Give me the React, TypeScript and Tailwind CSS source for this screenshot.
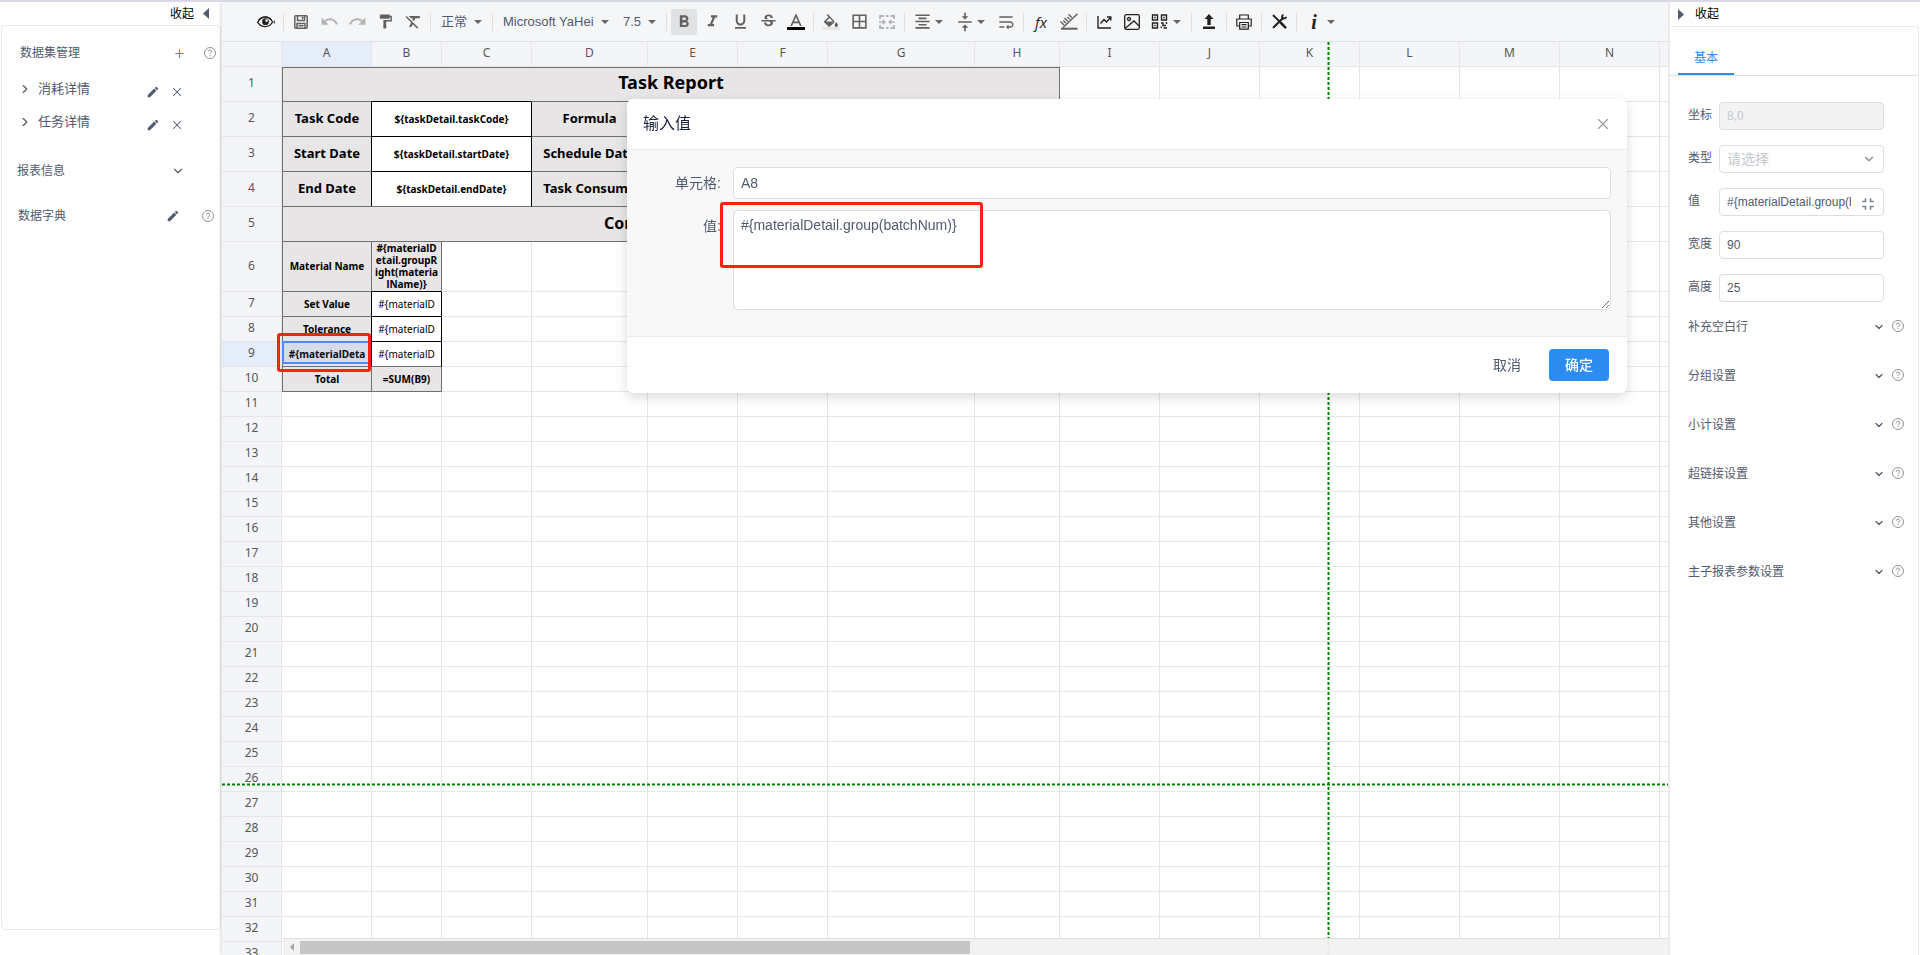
import { useState } from 'react';
import type { ReactNode } from 'react';
import clsx from 'clsx';
import { ChevronDown, ChevronRight, Plus, X } from 'lucide-react';
import {
  MdBorderAll,
  MdFormatAlignCenter,
  MdFormatBold,
  MdFormatClear,
  MdFormatColorFill,
  MdFormatItalic,
  MdFormatPaint,
  MdFormatUnderlined,
  MdFullscreenExit,
  MdModeEdit,
  MdRedo,
  MdStrikethroughS,
  MdUndo,
  MdVerticalAlignCenter,
  MdWrapText,
} from 'react-icons/md';

type Cell = { text: string; span?: number; cls: string };

const columns = [
  { name: 'A', width: 90 },
  { name: 'B', width: 70 },
  { name: 'C', width: 90 },
  { name: 'D', width: 116 },
  { name: 'E', width: 90 },
  { name: 'F', width: 90 },
  { name: 'G', width: 147 },
  { name: 'H', width: 85 },
  { name: 'I', width: 100 },
  { name: 'J', width: 100 },
  { name: 'K', width: 100 },
  { name: 'L', width: 100 },
  { name: 'M', width: 100 },
  { name: 'N', width: 100 },
  { name: 'O', width: 100 },
];

const gray = 'bg-[#e7e5e6] border-[#707070] font-bold text-black';
const label = gray + ' pb-[3px] text-[13px]';
const small = gray + ' pb-px text-[10px]';
const bound = 'bg-white border-black shadow-[-1px_-1px_0_#000] pb-px text-[10px] text-black';

const cells: Record<string, Cell> = {
  A1: { text: 'Task Report', span: 8, cls: gray + ' border-t pb-[5px] text-[18px]' },
  A2: { text: 'Task Code', cls: label },
  B2: { text: '${taskDetail.taskCode}', span: 2, cls: bound + ' font-bold' },
  D2: { text: 'Formula', cls: label },
  A3: { text: 'Start Date', cls: label },
  B3: { text: '${taskDetail.startDate}', span: 2, cls: bound + ' font-bold' },
  D3: { text: 'Schedule Date', cls: label },
  A4: { text: 'End Date', cls: label },
  B4: { text: '${taskDetail.endDate}', span: 2, cls: bound + ' border-b-[#707070] font-bold' },
  D4: { text: 'Task Consume', cls: label },
  A5: { text: 'Consume Details', span: 8, cls: gray + ' pb-[3px] text-[16px]' },
  A6: { text: 'Material Name', cls: small },
  B6: { text: '#{materialD\netail.groupR\night(materia\nlName)}', cls: small },
  A7: { text: 'Set Value', cls: small },
  B7: { text: '#{materialD', cls: bound },
  A8: { text: 'Tolerance', cls: small },
  B8: { text: '#{materialD', cls: bound },
  A9: { text: '#{materialDeta', cls: small },
  B9: { text: '#{materialD', cls: bound + ' border-b-[#707070]' },
  A10: { text: 'Total', cls: small },
  B10: { text: '=SUM(B9)', cls: small },
};

const headCell = 'border-r border-b border-[#e6e6e6] p-0 pb-[2px] text-[12px] leading-[16px] font-normal text-[#585757]';

function rowHeight(row: number) {
  if (row < 6) return 'h-[35px]';
  if (row === 6) return 'h-[50px]';
  return 'h-[25px]';
}

function SheetRow({ row }: { row: number }) {
  const tds: ReactNode[] = [];
  for (let i = 0; i < columns.length; i++) {
    const cell = cells[columns[i].name + row];
    const selected = row === 9 && i === 0;
    tds.push(
      <td
        key={i}
        colSpan={cell?.span}
        className={clsx(
          'relative border-r border-b p-0 text-center whitespace-pre leading-[12px]',
          cell ? cell.cls : 'border-[#e6e6e6] bg-white',
          cell && i === 0 && 'border-l'
        )}
      >
        {cell?.text}
        {selected && <span className="absolute -top-px -left-px h-[23px] w-[88px] border-2 border-[#4b89ff] bg-[#4b89ff1a]"></span>}
        {selected && <span className="absolute -top-[9px] -left-[6px] z-10 h-[39px] w-[94px] rounded-[3px] border-3 border-[#ff2014]"></span>}
      </td>
    );
    if (cell?.span) i += cell.span - 1;
  }
  return (
    <tr className={rowHeight(row)}>
      <th scope="row" className={clsx(headCell, row === 9 ? 'bg-[#e6edfa]' : 'bg-[#f4f5f8]')}>
        {row}
      </th>
      {tds}
    </tr>
  );
}

function Sheet() {
  const rows = Array.from({ length: 33 }, (_, i) => i + 1);
  return (
    <div className="relative min-h-0 flex-1 overflow-hidden bg-white font-['Noto_Sans',sans-serif]">
      <table className="w-[1538px] table-fixed border-separate border-spacing-0">
        <colgroup>
          <col className="w-[60px]" />
          {columns.map((c) => (
            <col key={c.name} style={{ width: c.width }} />
          ))}
        </colgroup>
        <thead>
          <tr className="h-[25px]">
            <th className={clsx(headCell, 'bg-[#f4f5f8]')}></th>
            {columns.map((c) => (
              <th key={c.name} scope="col" className={clsx(headCell, c.name === 'A' ? 'bg-[#e6edfa]' : 'bg-[#f4f5f8]')}>
                {c.name}
              </th>
            ))}
          </tr>
        </thead>
        <tbody>
          {rows.map((r) => (
            <SheetRow key={r} row={r} />
          ))}
        </tbody>
      </table>

      {/* print area guides */}
      <svg className="pointer-events-none absolute inset-0 h-full w-full" stroke="#008000" strokeWidth="2" strokeDasharray="3 2">
        <line x1="1106.5" y1="0" x2="1106.5" y2="1000" />
        <line x1="0" y1="742.5" x2="3000" y2="742.5" />
      </svg>

      <div className="absolute right-0 bottom-0 left-[61px] flex h-[17px] items-center border-t border-[#dddddd] bg-[#f1f1f1]/95">
        <button type="button" aria-label="scroll left" className="flex h-4 w-[17px] items-center justify-center">
          <svg width="4" height="8" viewBox="0 0 4 8" fill="#a3a3a3">
            <path d="M4 0v8L0 4z" />
          </svg>
        </button>
        <div className="h-[13px] w-[670px] bg-[#c6c6c6]"></div>
      </div>
    </div>
  );
}

function Caret() {
  return (
    <svg width="8" height="4" viewBox="0 0 8 4" fill="#666">
      <path d="M0 0h8L4 4z" />
    </svg>
  );
}

function Sep() {
  return <span className="mx-[3px] h-[18px] w-px shrink-0 bg-[#dfdfdf]"></span>;
}

function Tool({ name, children, active, dim, dark }: { name: string; children: ReactNode; active?: boolean; dim?: boolean; dark?: boolean }) {
  return (
    <button
      type="button"
      aria-label={name}
      className={clsx(
        'mx-px flex h-[26px] w-[26px] shrink-0 items-center justify-center rounded-[2px]',
        active && 'bg-[#e1e2e4]',
        dark ? 'text-[#222]' : dim ? 'text-[#b3b4b6]' : 'text-[#616161]'
      )}
    >
      {children}
    </button>
  );
}

function DropTool({ name, children, dark }: { name: string; children: ReactNode; dark?: boolean }) {
  return (
    <button
      type="button"
      aria-label={name}
      className={clsx('mx-px flex h-[26px] w-10 shrink-0 items-center justify-between pr-[6px] pl-1', dark ? 'text-[#222]' : 'text-[#616161]')}
    >
      {children}
      <Caret />
    </button>
  );
}

function TextTool({ text, width }: { text: string; width: string }) {
  return (
    <button type="button" className={clsx('mx-px flex h-[26px] shrink-0 items-center justify-between pr-[6px] pl-[6px] text-[13px] leading-4 whitespace-nowrap text-[#515a6e]', width)}>
      {text}
      <Caret />
    </button>
  );
}

function Toolbar() {
  return (
    <div className="flex h-10 shrink-0 items-center overflow-hidden border-b border-[#e0e2e6] bg-[#f5f6f7] pl-[30px]">
      <Tool name="preview" dark>
        <svg width="18" height="12" viewBox="0 0 18 12" fill="none" stroke="currentColor">
          <path d="M.7 6.3C2.5 3 5 1.2 8.3 1.2S14 3 15.6 6c-1.6 2.8-4 4.6-7.3 4.6S2.5 9 .7 6.3z" strokeWidth="1.3" />
          <path d="M1.5 4.2C4 1.2 6 .8 8.5.9s4.500 1 6 3" strokeWidth="1.2" />
          <circle cx="8.5" cy="5.7" r="3.4" fill="currentColor" stroke="none" />
          <circle cx="9.6" cy="4.6" r="1.3" fill="#fff" stroke="none" />
          <path d="M17.3 4.5v3" strokeWidth="1" />
        </svg>
      </Tool>
      <Sep />
      <Tool name="save">
        <svg width="14" height="14" viewBox="0 0 14 14" fill="none" stroke="currentColor" strokeWidth="1.5">
          <rect x=".8" y=".8" width="12.4" height="12.4" rx="1" />
          <path d="M3.500 1v4.500h7V1M3 13V8.500h8V13M8.500 2v2M4.500 10.800h5" />
        </svg>
      </Tool>
      <Tool name="undo" dim><MdUndo size={19} /></Tool>
      <Tool name="redo" dim><MdRedo size={19} /></Tool>
      <Tool name="paint format"><MdFormatPaint size={17} /></Tool>
      <Tool name="clear format"><MdFormatClear size={19} /></Tool>
      <Sep />
      <TextTool text="正常" width="w-[53px]" />
      <Sep />
      <TextTool text="Microsoft YaHei" width="w-[118px]" />
      <TextTool text="7.5" width="w-[45px]" />
      <Sep />
      <Tool name="bold" active><MdFormatBold size={20} /></Tool>
      <Tool name="italic"><MdFormatItalic size={19} /></Tool>
      <Tool name="underline"><MdFormatUnderlined size={19} /></Tool>
      <Tool name="strike"><MdStrikethroughS size={19} /></Tool>
      <Tool name="text color">
        <svg width="18" height="16" viewBox="0 0 18 16" fill="none" stroke="currentColor">
          <path d="M4.2 12L9 1.2 13.8 12M5.800 8.300h6.400" strokeWidth="1.7" />
          <path d="M0 14.500h18" stroke="#000" strokeWidth="3" />
        </svg>
      </Tool>
      <Sep />
      <Tool name="fill color">
        <svg width="18" height="16" viewBox="0 0 18 16" fill="currentColor">
          <path d="M5.800 0L4.700 1.100l1.800 1.800L2.300 7.100a1 1 0 0 0 0 1.300l4.300 4.200a1 1 0 0 0 1.300 0l4.300-4.200a1 1 0 0 0 0-1.300zM7.500 3.900L11 7.400H4zM14.300 8.300s-1.700 1.900-1.700 3a1.700 1.700 0 0 0 3.400 0c0-1.100-1.700-3-1.700-3z" />
          <path d="M0 13h18v3H0z" fill="#e7e5e6" />
        </svg>
      </Tool>
      <Tool name="borders"><MdBorderAll size={19} /></Tool>
      <Tool name="merge" dim>
        <svg width="16" height="14" viewBox="0 0 16 14" fill="none" stroke="currentColor" strokeWidth="1.8">
          <path d="M1 4V1h4M7 1h2.500M11.500 1H15v3M1 10v3h4M7 13h2.500M11.500 13H15v-3" />
          <path d="M0 7h5M16 7h-5M3.700 4.700L6 7 3.700 9.300M12.300 4.700L10 7l2.300 2.300" strokeWidth="1.4" />
        </svg>
      </Tool>
      <Sep />
      <DropTool name="align"><MdFormatAlignCenter size={19} /></DropTool>
      <DropTool name="vertical align"><MdVerticalAlignCenter size={20} /></DropTool>
      <Tool name="wrap"><MdWrapText size={20} /></Tool>
      <Sep />
      <Tool name="formula" dark>
        <span className="font-['Open_Sans',sans-serif] text-[15px] leading-4 font-medium italic">fx</span>
      </Tool>
      <Tool name="ruler">
        <svg width="18" height="17" viewBox="0 0 18 17" fill="none" stroke="currentColor">
          <path d="M17.500.7L3 14.500" strokeWidth="1.5" />
          <path d="M1 15.700h16.500" strokeWidth="2" />
          <path d="M.5 8.500l3.500 3.500M3.300 7.500l2.500 2.500M4.500 5l3.300 3.300M7.500 4l2.200 2.200M8.500 1.200l3.300 3.300" strokeWidth="1.4" />
        </svg>
      </Tool>
      <Sep />
      <Tool name="chart" dark>
        <svg width="15" height="14" viewBox="0 0 15 14" fill="none" stroke="currentColor" strokeWidth="1.4">
          <path d="M1 1v12h13M3.500 8.500L7 4.500l2.500 2.500L13.500 2.500M10 2h3.800v3.600" />
        </svg>
      </Tool>
      <Tool name="image" dark>
        <svg width="16" height="16" viewBox="0 0 16 16" fill="none" stroke="currentColor" strokeWidth="1.3">
          <rect x=".7" y=".7" width="14.6" height="14.6" rx="1.5" />
          <circle cx="5" cy="5" r="1.5" />
          <path d="M1 14.500L10 7l5 5" />
        </svg>
      </Tool>
      <DropTool name="code" dark>
        <svg width="17" height="15" viewBox="0 0 16 15" fill="none" stroke="currentColor" strokeWidth="1.4">
          <path d="M1 1h5v5H1zM10 1h5v5h-5zM1 9h5v5H1zM9.500 9h2v2.500h3M15 8v2M9.700 14v-1.500M12 14h3.500" />
          <path d="M2.800 3.500h1.400M11.800 3.500h1.400M2.800 11.500h1.400" />
        </svg>
      </DropTool>
      <Sep />
      <Tool name="upload" dark>
        <svg width="12" height="15" viewBox="0 0 12 15" fill="currentColor">
          <path d="M6 0l4.500 5H7.700v6H4.300V5H1.500zM0 12.500h12V15H0z" />
        </svg>
      </Tool>
      <Sep />
      <Tool name="print" dark>
        <svg width="16" height="16" viewBox="0 0 16 16" fill="none" stroke="currentColor" strokeWidth="1.2">
          <path d="M3.700 5V1h8.600v4M3.700 12H.8V5h14.400v7h-2.900M3.700 8.500h8.600v6.700H3.700zM5.500 10.700h5M5.500 13h5" />
        </svg>
      </Tool>
      <Sep />
      <Tool name="tools" dark>
        <svg width="15" height="15" viewBox="0 0 15 15" fill="none" stroke="currentColor" strokeLinecap="round">
          <path d="M1.500 1.500l6 6" strokeWidth="1.8" />
          <path d="M9 9l4.300 4.300" strokeWidth="2.6" />
          <path d="M1.700 13.300L11 4" strokeWidth="2.2" />
          <path d="M10.800 1.200c-1.200 1-1 3.200.6 3.300 1 .1 2-.1 2.500-1" strokeWidth="1.8" />
        </svg>
      </Tool>
      <Sep />
      <DropTool name="info" dark>
        <span className="w-[18px] text-center font-['Liberation_Serif',serif] text-[20px] leading-5 font-bold italic">i</span>
      </DropTool>
    </div>
  );
}

function HelpIcon() {
  return (
    <svg width="12" height="12" viewBox="0 0 12 12" fill="none" stroke="#888" className="shrink-0">
      <circle cx="6" cy="6" r="5.500" strokeWidth=".9" />
      <path d="M4.300 4.700c0-2.100 3.400-2.100 3.400 0C7.700 5.800 6 5.900 6 7.200M6 8.100v1.100" strokeWidth="1" />
    </svg>
  );
}

function Datasets() {
  return (
    <ul className="mt-[13px] flex flex-col gap-[7px]">
      {['消耗详情', '任务详情'].map((name) => (
        <li key={name} className="flex h-[26px] items-center pl-[16px]">
          <ChevronRight size={14} strokeWidth={2} />
          <span className="ml-[6px] text-[13px] leading-5">{name}</span>
          <button type="button" aria-label={'edit ' + name} className="mt-[6px] ml-auto"><MdModeEdit size={14} /></button>
          <button type="button" aria-label={'remove ' + name} className="mt-[6px] mr-[36px] ml-[10px]"><X size={14} strokeWidth={1.800} /></button>
        </li>
      ))}
    </ul>
  );
}

function LeftPanel() {
  return (
    <aside className="flex w-[222px] shrink-0 flex-col text-[12px] text-[#515a6e]">
      <button type="button" className="flex h-[23px] items-center justify-end gap-[9px] pr-[13px] text-black">
        收起
        <svg width="6" height="11" viewBox="0 0 6 11" fill="#515a6e"><path d="M6 0v11L0 5.500z" /></svg>
      </button>
      <div className="mr-px mb-[25px] ml-px flex-1 rounded-[4px] border border-[#e8eaec]">
        <div className="mt-[17px] flex h-5 items-center pl-[18px]">
          数据集管理
          <button type="button" aria-label="add" className="ml-auto text-[#2d8cf0]"><Plus size={13} strokeWidth={2} /></button>
          <span className="mr-1 ml-[18px]"><HelpIcon /></span>
        </div>
        <Datasets />
        <div className="mt-[26px] flex h-5 items-center pl-[15px]">
          报表信息
          <ChevronDown size={14} strokeWidth={2} className="mr-[35px] ml-auto" />
        </div>
        <div className="mt-[25px] flex h-5 items-center pl-[16px]">
          数据字典
          <button type="button" aria-label="edit" className="ml-auto"><MdModeEdit size={14} /></button>
          <span className="mr-[6px] ml-[22px]"><HelpIcon /></span>
        </div>
      </div>
    </aside>
  );
}

const field = 'h-7 w-[165px] rounded-[4px] border border-[#dcdee2] px-[7px] text-[12px] text-[#515a6e]';
const sections = ['补充空白行', '分组设置', '小计设置', '超链接设置', '其他设置', '主子报表参数设置'];

function Field({ id, name, children }: { id: string; name: string; children: ReactNode }) {
  return (
    <div className="flex">
      <label htmlFor={id} className="w-[31px] pt-[3px] leading-5">{name}</label>
      <div className="relative">{children}</div>
    </div>
  );
}

function RightPanel() {
  const [width, setWidth] = useState('90');
  const [height, setHeight] = useState('25');
  return (
    <aside className="flex w-[252px] shrink-0 flex-col border-l-2 border-[#ebebeb] bg-white text-[12px] text-[#515a6e]">
      <button type="button" className="flex h-6 items-center gap-[11px] pl-2 text-black">
        <svg width="6" height="11" viewBox="0 0 6 11" fill="#515a6e"><path d="M0 0v11l6-5.500z" /></svg>
        收起
      </button>
      <div className="mr-px flex-1 rounded-t-[4px] border-t border-r border-[#e8eaec]">
        <div className="flex border-b border-[#dcdee2] pt-[16px] pl-2">
          <button type="button" className="h-8 border-b-2 border-[#2d8cf0] px-4 leading-5 text-[#2d8cf0]">基本</button>
        </div>
        <form className="mt-[26px] flex flex-col gap-[15px] pl-[18px]">
          <Field id="coord" name="坐标">
            <input id="coord" disabled value="8,0" className={field + ' bg-[#f3f3f3] text-[#c5c8ce]!'} />
          </Field>
          <Field id="type" name="类型">
            <select id="type" className={field + ' appearance-none bg-white text-[14px]! text-[#c5c8ce]!'}>
              <option>请选择</option>
            </select>
            <ChevronDown size={14} className="pointer-events-none absolute top-[7px] right-[8px] text-[#808695]" />
          </Field>
          <Field id="cellValue" name="值">
            <input id="cellValue" readOnly value="#{materialDetail.group(batchNum)}" className={field + ' pr-[32px]'} />
            <MdFullscreenExit size={20} className="absolute top-[6px] right-[6px] text-[#808695]" />
          </Field>
          <Field id="cellWidth" name="宽度">
            <input id="cellWidth" value={width} onChange={(e) => setWidth(e.target.value)} className={field} />
          </Field>
          <Field id="cellHeight" name="高度">
            <input id="cellHeight" value={height} onChange={(e) => setHeight(e.target.value)} className={field} />
          </Field>
        </form>
        <div className="mt-[15px] flex flex-col gap-[29px] pl-[18px]">
          {sections.map((s) => (
            <button key={s} type="button" className="flex h-5 items-center text-left">
              {s}
              <ChevronDown size={12} strokeWidth={2.500} className="ml-auto" />
              <span className="mr-[14px] mb-[3px] ml-[7px]"><HelpIcon /></span>
            </button>
          ))}
        </div>
      </div>
    </aside>
  );
}

function ValueDialog() {
  const [value, setValue] = useState('#{materialDetail.group(batchNum)}');
  return (
    <div role="dialog" aria-labelledby="dialogTitle" className="fixed top-[99px] right-[293px] z-20 w-[1000px] rounded-[6px] bg-white text-[14px] text-[#515a6e] shadow-[0_4px_12px_rgba(0,0,0,0.15)]">
      <div className="flex h-[51px] items-center justify-between border-b border-[#e8eaec] pr-[15px] pl-4">
        <h2 id="dialogTitle" className="text-[16px] leading-5 text-[#17233d]">输入值</h2>
        <button type="button" aria-label="close" className="text-[#999]"><X size={18} strokeWidth={1.500} /></button>
      </div>
      <form className="flex flex-col gap-[11px] border-b border-[#e8eaec] bg-[#f8f8f8] pt-[17px] pr-4 pb-[26px]">
        <div className="flex">
          <label htmlFor="cell" className="w-[106px] shrink-0 pt-[6px] pr-3 text-right leading-5">单元格:</label>
          <input id="cell" readOnly value="A8" className="h-8 flex-1 rounded-[4px] border border-[#dcdee2] bg-white px-[7px]" />
        </div>
        <div className="relative flex">
          <label htmlFor="value" className="w-[106px] shrink-0 pt-[6px] pr-3 text-right leading-5">值:</label>
          <textarea
            id="value"
            value={value}
            onChange={(e) => setValue(e.target.value)}
            className="h-[100px] flex-1 rounded-[4px] border border-[#dcdee2] bg-white px-[7px] py-1 leading-[21px]"
          />
          <span className="pointer-events-none absolute -top-2 left-[93px] h-[66px] w-[263px] rounded-[3px] border-3 border-[#ff2014]"></span>
        </div>
      </form>
      <div className="flex justify-end gap-3 py-3 pr-[18px]">
        <button type="button" className="h-8 w-[60px]">取消</button>
        <button type="button" className="h-8 w-[60px] rounded-[4px] bg-[#2d8cf0] font-medium text-white">确定</button>
      </div>
    </div>
  );
}

export default function App() {
  return (
    <div className="flex h-screen overflow-hidden border-t-2 border-[#d7dae4] bg-white font-['Liberation_Sans','Noto_Sans_CJK_SC',sans-serif]">
      <LeftPanel />
      <main className="flex min-w-0 flex-1 flex-col shadow-[0_0_4px_rgba(0,0,0,0.25)]">
        <Toolbar />
        <Sheet />
      </main>
      <RightPanel />
      <ValueDialog />
    </div>
  );
}
